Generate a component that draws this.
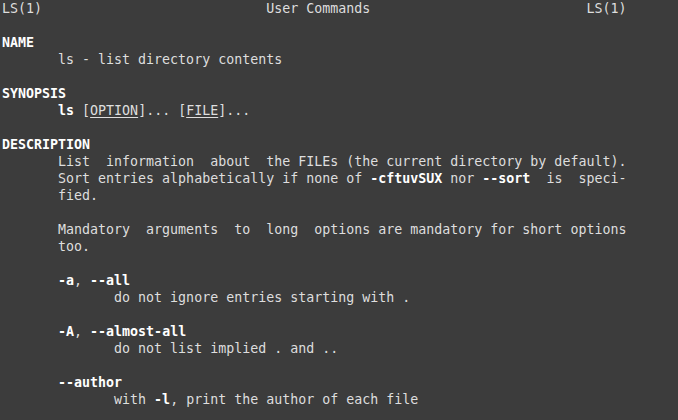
import React from "react";

type Seg = { t: string; b?: boolean; u?: boolean };

const B = (t: string): Seg => ({ t, b: true });
const U = (t: string): Seg => ({ t, u: true });
const N = (t: string): Seg => ({ t });

const lines: Seg[][] = [
  [N("LS(1)                            User Commands                           LS(1)")],
  [],
  [B("NAME")],
  [N("       ls - list directory contents")],
  [],
  [B("SYNOPSIS")],
  [N("       "), B("ls"), N(" ["), U("OPTION"), N("]... ["), U("FILE"), N("]...")],
  [],
  [B("DESCRIPTION")],
  [N("       List  information  about  the FILEs (the current directory by default).")],
  [N("       Sort entries alphabetically if none of "), B("-cftuvSUX"), N(" nor "), B("--sort"), N("  is  speci-")],
  [N("       fied.")],
  [],
  [N("       Mandatory  arguments  to  long  options are mandatory for short options")],
  [N("       too.")],
  [],
  [N("       "), B("-a"), N(", "), B("--all")],
  [N("              do not ignore entries starting with .")],
  [],
  [N("       "), B("-A"), N(", "), B("--almost-all")],
  [N("              do not list implied . and ..")],
  [],
  [N("       "), B("--author")],
  [N("              with "), B("-l"), N(", print the author of each file")],
  [],
];

export default function App() {
  return (
    <div className="w-[678px] h-[420px] overflow-hidden bg-[#3c3c3c] pl-[2px] text-[#dedede] font-['DejaVu_Sans_Mono',monospace] text-[13.3px] leading-[17px]">
      {lines.map((segs, i) => (
        <div key={i} className="h-[17px] whitespace-pre">
          {segs.map((s, j) => (
            <span
              key={j}
              className={
                (s.b ? "font-bold text-white " : "") +
                (s.u ? "underline underline-offset-2 " : "")
              }
            >
              {s.t}
            </span>
          ))}
        </div>
      ))}
    </div>
  );
}
